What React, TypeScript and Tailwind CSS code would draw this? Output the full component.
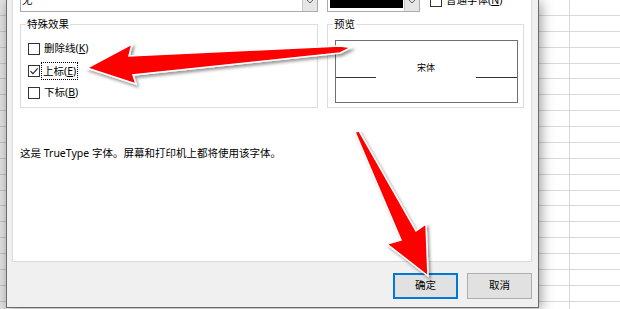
import React from "react";

const rows = Array.from({ length: 20 }, (_, i) => i);

function Box({ checked }: { checked?: boolean }) {
  return (
    <span className="w-[12px] h-[12px] border border-[#333] bg-white flex items-center justify-center shrink-0">
      {checked && (
        <svg width="10" height="10" viewBox="0 0 10 10">
          <path d="M1.4 5.1 L3.9 7.6 L8.7 2.3" fill="none" stroke="#222" strokeWidth="1.1" />
        </svg>
      )}
    </span>
  );
}

function Chevron() {
  return (
    <svg width="8" height="5" viewBox="0 0 8 5">
      <path d="M0.5 0.5 L4 4 L7.5 0.5" fill="none" stroke="#606060" strokeWidth="1" />
    </svg>
  );
}

function DropButton() {
  return (
    <div className="w-[15px] h-full bg-[#e6e6e6] border-l border-[#c8c8c8] flex items-center justify-center shrink-0">
      <Chevron />
    </div>
  );
}

function Group({ label, className, children }: { label: string; className: string; children: React.ReactNode }) {
  return (
    <div className={`relative border border-[#dcdcdc] ${className}`}>
      <span className="absolute left-[5px] -top-[8px] bg-white px-[1px] leading-[14px]">{label}</span>
      {children}
    </div>
  );
}

export default function App() {
  return (
    <div className="relative w-[620px] h-[309px] overflow-hidden bg-white text-black text-[10.5px] font-['Noto_Sans','Noto_Sans_CJK_SC',sans-serif]">
      {/* spreadsheet behind the dialog */}
      <div className="flex flex-col">
        {rows.map((r) => (
          <div key={r} className="flex h-[15.89px] shrink-0">
            <div className="w-[6px] bg-[#e3e3e3] border-b border-[#c4c4c4]" />
            <div className="w-[564px] border-b border-r border-[#d9d9d9]" />
            <div className="flex-1 border-b border-[#d9d9d9]" />
          </div>
        ))}
      </div>

      {/* font dialog */}
      <div className="absolute left-[6px] top-0 w-[533px] h-[308px] flex flex-col bg-[#f0f0f0] border-x border-b border-[#6b6b6b] pl-[5px] pr-[6px] shadow-[2px_2px_12px_rgba(0,0,0,0.4)]">
        <div className="h-[262px] shrink-0 bg-white border-x border-b border-[#d9d9d9] pl-[7px] flex flex-col">
          {/* top controls */}
          <div className="flex items-center h-[22px] -mt-[10px] shrink-0">
            <div className="w-[298px] h-full flex border border-[#ababab] bg-white">
              <span className="flex-1 pl-[1px] flex items-center">无</span>
              <DropButton />
            </div>
            <div className="ml-[9px] w-[93px] h-full flex border border-[#ababab] bg-white">
              <div className="flex-1 pl-[2px] pr-[1px] pb-[3px] flex">
                <div className="flex-1 bg-black" />
              </div>
              <DropButton />
            </div>
            <div className="ml-[10px] flex items-center gap-[4px]">
              <Box />
              <span>
                普通字体(<span className="underline">N</span>)
              </span>
            </div>
          </div>

          {/* group boxes */}
          <div className="flex mt-[12px]">
            <Group label="特殊效果" className="w-[298px] h-[84px]">
              <div className="flex flex-col pl-[7px] pt-[13px]">
                <div className="flex items-center h-[22px]">
                  <Box />
                  <span className="ml-[4px]">
                    删除线(<span className="underline">K</span>)
                  </span>
                </div>
                <div className="flex items-center h-[22px]">
                  <Box checked />
                  <span className="ml-[1px] px-[1px] leading-[16px] border border-dotted border-black">
                    上标(<span className="underline">E</span>)
                  </span>
                </div>
                <div className="flex items-center h-[22px]">
                  <Box />
                  <span className="ml-[4px]">
                    下标(<span className="underline">B</span>)
                  </span>
                </div>
              </div>
            </Group>
            <Group label="预览" className="ml-[9px] w-[197px] h-[84px]">
              <div className="pl-[7px] pt-[15px]">
                <div className="w-[183px] h-[63px] border border-[#707070] bg-white flex flex-col">
                  <div className="h-[20px] shrink-0" />
                  <div className="flex items-end h-[17px]">
                    <div className="w-[40px] h-px bg-[#333]" />
                    <span className="flex-1 self-start text-center text-[9px] leading-[13px]">宋体</span>
                    <div className="w-[41px] h-px bg-[#333]" />
                  </div>
                </div>
              </div>
            </Group>
          </div>

          <p className="mt-[38px] leading-[14px]">这是 TrueType 字体。屏幕和打印机上都将使用该字体。</p>
        </div>

        {/* buttons */}
        <div className="flex justify-end gap-[9px] pt-[11px]">
          <button className="w-[65px] h-[26px] bg-[#e1e1e1] border-2 border-[#0078d7] flex items-center justify-center">确定</button>
          <button className="w-[65px] h-[26px] bg-[#e1e1e1] border border-[#adadad] flex items-center justify-center">取消</button>
        </div>
      </div>

      {/* annotation arrows */}
      <svg className="absolute inset-0 pointer-events-none" width="620" height="309" viewBox="0 0 620 309">
        <defs>
          <filter id="arrowShadow" x="-20%" y="-20%" width="140%" height="140%">
            <feDropShadow dx="2" dy="2.5" stdDeviation="1.6" floodColor="#000" floodOpacity="0.4" />
          </filter>
        </defs>
        <g filter="url(#arrowShadow)" fill="#ff0000" stroke="#fff" strokeWidth="1.5" strokeLinejoin="miter">
          <polygon points="87,68 132,44 129,56 340,46 351,47.5 340,53 133,75 136,84" />
          <polygon points="355,132 359,131 416,231 426,224 428,276 387,244 401,240" />
        </g>
      </svg>
    </div>
  );
}
